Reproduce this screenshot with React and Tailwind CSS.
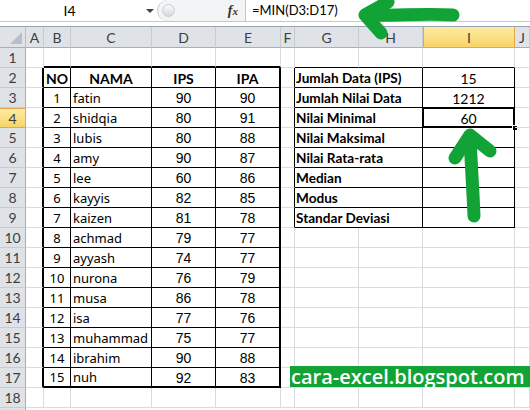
import React from "react";

const COLS = ["", "A", "B", "C", "D", "E", "F", "G", "H", "I", "J"];

const siswa = [
  [1, "fatin", 90, 90],
  [2, "shidqia", 80, 91],
  [3, "lubis", 80, 88],
  [4, "amy", 90, 87],
  [5, "lee", 60, 86],
  [6, "kayyis", 82, 85],
  [7, "kaizen", 81, 78],
  [8, "achmad", 79, 77],
  [9, "ayyash", 74, 77],
  [10, "nurona", 76, 79],
  [11, "musa", 86, 78],
  [12, "isa", 77, 76],
  [13, "muhammad", 75, 77],
  [14, "ibrahim", 90, 88],
  [15, "nuh", 92, 83],
];

const statistik = [
  ["Jumlah Data (IPS)", "15"],
  ["Jumlah Nilai Data", "1212"],
  ["Nilai Minimal", "60"],
  ["Nilai Maksimal", ""],
  ["Nilai Rata-rata", ""],
  ["Median", ""],
  ["Modus", ""],
  ["Standar Deviasi", ""],
];

// garis tepi kanan / bawah tiap sel
const borders = (r, c) => {
  let right = "border-r border-r-[#d9dbde]";
  let bottom = "border-b border-b-[#d9dbde]";

  const inT1 = r >= 2 && r <= 17 && c >= 2 && c <= 5;
  const inT2 = r >= 2 && r <= 9 && c >= 7 && c <= 9;

  if (inT1) {
    right = c === 5 ? "border-r-2 border-r-black" : "border-r border-r-black";
    bottom = r === 17 ? "border-b-2 border-b-black" : "border-b border-b-black";
  }
  if (c === 1 && r >= 2 && r <= 17) right = "border-r-2 border-r-black";
  if (r === 1 && c >= 2 && c <= 5) bottom = "border-b-2 border-b-black";

  if (inT2) {
    right = "border-r border-r-black";
    bottom = "border-b border-b-black";
  }
  if (c === 6 && r >= 2 && r <= 9) right = "border-r border-r-black";
  if (r === 1 && c >= 7 && c <= 9) bottom = "border-b border-b-black";

  return right + " " + bottom;
};

const cellContent = (r, c) => {
  if (r === 2) {
    if (c === 2) return { text: "NO", cls: "justify-center font-bold font-['Lato'] text-[14px]" };
    if (c === 3) return { text: "NAMA", cls: "justify-center font-bold font-['Lato'] text-[14px]" };
    if (c === 4) return { text: "IPS", cls: "justify-center font-bold font-['Lato'] text-[14px]" };
    if (c === 5) return { text: "IPA", cls: "justify-center font-bold font-['Lato'] text-[14px]" };
  }
  if (r >= 3 && r <= 17) {
    const s = siswa[r - 3];
    if (c === 2) return { text: s[0], cls: "justify-center font-['Noto_Sans'] text-[13px]" };
    if (c === 3) return { text: s[1], cls: "justify-start pl-[2px] font-['Noto_Sans'] text-[13px]" };
    if (c === 4) return { text: s[2], cls: "justify-center font-['Liberation_Sans'] text-[14px]" };
    if (c === 5) return { text: s[3], cls: "justify-center font-['Liberation_Sans'] text-[14px]" };
  }
  if (r >= 2 && r <= 9) {
    const st = statistik[r - 2];
    if (c === 7) return { text: st[0], cls: "justify-start pl-[1px] font-bold font-['Lato'] text-[13.6px]" };
    if (c === 9) return { text: st[1], cls: "justify-center font-['Lato'] text-[14px]" };
  }
  return { text: "", cls: "" };
};

const FormulaBar = () => (
  <div>
    <div className="flex h-[22px] border-b border-b-[#c4c8ce] bg-white">
      <div className="relative flex w-[157px] items-center justify-center pr-[18px] font-['Lato'] text-[14px] text-black">
        I4
        <span className="absolute right-[3px] top-[9px] h-0 w-0 border-x-[4px] border-t-[4px] border-x-transparent border-t-[#444]" />
      </div>
      <div className="flex w-[88px] items-center rounded-l-[11px] border-l border-l-[#c4c8ce] bg-[#f3f4f6] pl-[4px]">
        <span className="h-[13px] w-[13px] rounded-full border border-[#c9cdd3] bg-gradient-to-b from-[#fafafa] to-[#d5d8dc]" />
        <span className="ml-auto mr-[7px] font-['Liberation_Serif'] text-[14px] font-bold italic text-[#333]">
          f<span className="text-[11px]">x</span>
        </span>
      </div>
      <div className="flex flex-1 items-center border-l border-l-[#c4c8ce] pl-[6px] font-['Lato'] text-[13px] text-black">
        =MIN(D3:D17)
      </div>
    </div>
    <div className="h-[5px] border-b border-b-[#9aa3ad] bg-white" />
  </div>
);

export default function App() {
  const cells = [];

  // baris judul kolom
  COLS.forEach((col, c) => {
    if (c === 0) {
      cells.push(
        <div key="h0" className="flex h-[21px] items-end justify-end border-r border-r-[#b7bec7] border-b border-b-[#9eb0c4] bg-[#dfe3e8] p-[3px]">
          <svg width="12" height="12">
            <polygon points="12,0 12,12 0,12" fill="#b9bec5" />
          </svg>
        </div>
      );
      return;
    }
    const sel = col === "I";
    cells.push(
      <div
        key={"h" + c}
        className={
          sel
            ? "flex h-[21px] items-center justify-center border-x border-x-[#e2a84a] border-b border-b-[#e2a84a] bg-gradient-to-b from-[#fdeca3] to-[#f8d467] font-['Lato'] text-[14px] text-[#3d3d3d]"
            : "flex h-[21px] items-center justify-center border-r border-r-[#c7ccd3] border-b border-b-[#9eb0c4] bg-[#dfe3e8] font-['Lato'] text-[14px] text-[#3d3d3d]"
        }
      >
        {col}
      </div>
    );
  });

  for (let r = 1; r <= 18; r++) {
    for (let c = 0; c <= 10; c++) {
      if (c === 0) {
        cells.push(
          <div
            key={r + "-0"}
            className={
              r === 4
                ? "flex h-[20px] items-center justify-center border-y border-y-[#e2a84a] border-r border-r-[#e2a84a] bg-gradient-to-b from-[#fdeca3] to-[#f8d467] font-['Lato'] text-[14px] text-[#3d3d3d]"
                : "flex h-[20px] items-center justify-center border-r border-r-[#9eb0c4] border-b border-b-[#c7ccd3] bg-[#dfe3e8] font-['Lato'] text-[14px] text-[#3d3d3d]"
            }
          >
            {r}
          </div>
        );
        continue;
      }
      // G:H digabung pada tabel statistik
      if (c === 8 && r >= 2 && r <= 9) continue;
      const merged = c === 7 && r >= 2 && r <= 9;
      const { text, cls } = cellContent(r, c);
      const selected = r === 4 && c === 9;
      cells.push(
        <div
          key={r + "-" + c}
          className={
            "relative flex h-[20px] items-center overflow-visible whitespace-nowrap pt-[2px] text-black " +
            (merged ? "col-span-2 " : "") +
            borders(r, c) +
            " " +
            cls
          }
        >
          {text}
          {selected && (
            <>
              <span className="absolute -bottom-[1px] -left-[1px] -right-[1px] -top-[1px] border-2 border-black" />
              <span className="absolute -bottom-[4px] -right-[4px] h-[6px] w-[6px] border border-white bg-black" />
            </>
          )}
        </div>
      );
    }
  }

  return (
    <div className="relative h-[410px] w-[530px] overflow-hidden bg-white">
      <FormulaBar />
      <div className="grid grid-cols-[26px_18px_27px_81px_64px_65px_14px_64px_64px_92px_15px]">{cells}</div>
      <div className="flex h-[2px]">
        <div className="w-[26px] border-r border-r-[#9eb0c4] bg-[#dfe3e8]" />
      </div>

      {/* coretan panah hijau */}
      <svg className="pointer-events-none absolute left-0 top-0" width="530" height="410">
        <g fill="none" stroke="#12a336" strokeWidth="13" strokeLinecap="round" strokeLinejoin="round">
          <path d="M453 15 C425 13 395 16 366 15" />
          <path d="M388 2 L365 15 L381 33" />
          <path d="M474 216 C473 190 471 162 470 136" />
          <path d="M455 158 L470 135 L490 151" />
        </g>
      </svg>

      <div className="absolute left-[290px] top-[366px] whitespace-nowrap bg-[#12a336] pl-[1px] pr-[6px] font-['Open_Sans'] text-[20px] font-semibold leading-[21px] text-white">
        cara-excel.blogspot.com
      </div>
    </div>
  );
}
